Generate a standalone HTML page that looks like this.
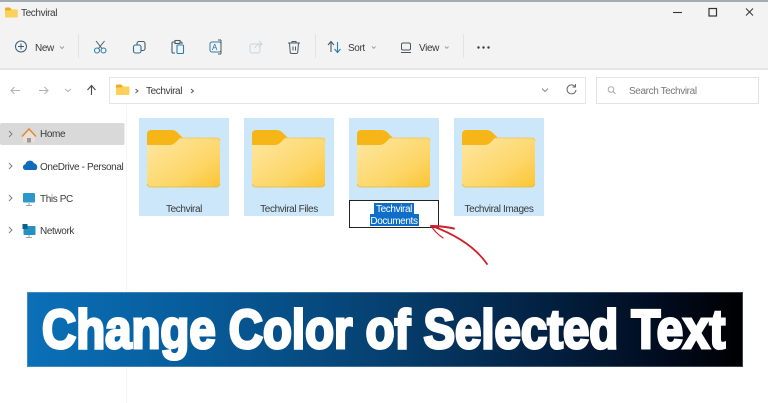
<!DOCTYPE html>
<html><head><meta charset="utf-8">
<style>
html,body{margin:0;padding:0;background:#fff}
#p{position:relative;width:768px;height:403px;overflow:hidden;background:#fff;font-family:"Liberation Sans",sans-serif;color:#333;filter:blur(.35px)}
#p div,#p svg{position:absolute}
.t{font-size:10px;line-height:12px;white-space:nowrap;color:#3a3a3a;letter-spacing:-.38px}
.tile{background:#cce6fa;width:90px;height:98px;top:118px}
.lb{text-align:center;width:90px;top:203.500px}
.ic{fill:none;stroke:#4a5560;stroke-width:1}
</style></head><body><div id="p">
<div style="left:0;top:0;width:768px;height:68px;background:#f3f3f3"></div>
<div style="left:0;top:0;width:768px;height:2px;background:#a3abb3"></div>
<div style="left:0;top:68px;width:768px;height:2px;background:#e6e6e6"></div>
<div style="left:126px;top:105px;width:1px;height:298px;background:#f6f6f6"></div>

<svg width="768" height="403" viewBox="0 0 768 403" style="left:0;top:0">
<defs>
<linearGradient id="f" x1="0" y1="0" x2="1" y2="1"><stop offset="0" stop-color="#fee7a2"/><stop offset=".65" stop-color="#fdd667"/><stop offset="1" stop-color="#fbc534"/></linearGradient>
<g id="folder">
<path d="M0 4a4 4 0 0 1 4-4h20c3 0 5 1 7 3l6 6v8H0z" fill="#f7b618"/>
<path d="M0 15h22c3 0 5-1 7-3l4-4h37a3 3 0 0 1 3 3v43a3 3 0 0 1-3 3H3a3 3 0 0 1-3-3z" fill="url(#f)"/>
<path d="M.5 54a3 3 0 0 0 3 3h66a3 3 0 0 0 3-3" fill="none" stroke="#e9b53a" stroke-width=".8"/>
<path d="M33 8h37a3 3 0 0 1 3 3" fill="none" stroke="#f2c350" stroke-width=".8"/>
</g>
<g id="mini"><path d="M0 2a1.500 1.500 0 0 1 1.500-1.500h3.500l2 2h5.500a1 1 0 0 1 1 1v6.500a1 1 0 0 1-1 1H1a1 1 0 0 1-1-1z" fill="#fbd15c"/><path d="M0 2a1.500 1.500 0 0 1 1.500-1.500h3.500l2 2-2 1H0z" fill="#eeaa20"/></g>
</defs>

<use href="#mini" transform="translate(5 7) scale(.95)"/>

<!-- new -->
<g class="ic"><circle cx="21" cy="46.500" r="5.500" stroke="#3d5c73"/><path d="M21 43.500v6M18 46.500h6" stroke="#3d5c73"/>
<path d="M60 46.500l2 2 2-2" stroke="#9aa0a5"/></g>
<!-- cut -->
<g fill="none" stroke="#2a7fb0" stroke-width="1.100"><circle cx="97" cy="50.500" r="2.500"/><circle cx="103.500" cy="50.500" r="2.500"/></g>
<path d="M98.500 48.500L104.500 41M102 48.500L96 41" stroke="#4a5a66" fill="none"/>
<!-- copy -->
<g fill="none" stroke="#2a6f9c" stroke-width="1.100"><rect x="137" y="41.500" width="8" height="9" rx="2" stroke="#4a5a66"/><rect x="133.500" y="45" width="7.500" height="8" rx="2" fill="#f3f3f3"/></g>
<!-- paste -->
<g fill="none" stroke-width="1.100"><path d="M175 53h-2a1 1 0 0 1-1-1V43a1 1 0 0 1 1-1h8a1 1 0 0 1 1 1v1" stroke="#4a5a66"/><rect x="175" y="40.500" width="5" height="3" fill="#f3f3f3" stroke="#4a5a66"/><rect x="177" y="45" width="6.500" height="8.500" rx="1" stroke="#2a7fb0"/></g>
<!-- rename -->
<g fill="none" stroke-width="1"><rect x="210" y="42" width="11" height="10" rx="2" stroke="#2a7fb0"/><path d="M218 40h3M218 54h3M221 40v14" stroke="#4a5a66"/></g>
<text x="212" y="50" font-size="8" fill="#2a6f9c" font-family="Liberation Sans">A</text>
<!-- share -->
<g fill="none" stroke="#c8d4dc"><rect x="250" y="44" width="10" height="9" rx="2"/><path d="M255 48c1-3 3-4 7-4M259 41l3 3-3 3"/></g>
<!-- delete -->
<g fill="none" stroke="#4a5a66"><path d="M288 43h12M292 43v-1.500h4V43M289.500 43l.7 9a1.500 1.500 0 0 0 1.500 1.500h4.600a1.500 1.500 0 0 0 1.500-1.500l.7-9M293 46.500v4M295.500 46.500v4"/></g>
<!-- dividers -->
<path d="M78.500 34v24M315.500 34v24M463.500 34v24" stroke="#e3e3e3"/>
<!-- sort -->
<g fill="none" stroke-width="1.100"><path d="M331 52V42M328 45l3-3.500 3 3.500" stroke="#4a5a66"/><path d="M337.500 42v10.500M334.500 49l3 3.500 3-3.500" stroke="#2a7fb0"/></g>
<path d="M372 46.500l1.800 1.800 1.800-1.800M445 46.500l1.800 1.800 1.800-1.800" stroke="#9aa0a5" fill="none"/>
<!-- view -->
<g fill="none" stroke="#4a5560"><rect x="401.500" y="43" width="9" height="7" rx="1.500"/><path d="M401 52.500h10"/></g>
<!-- dots -->
<g fill="#3a3a3a"><circle cx="478.500" cy="47.500" r="1.200"/><circle cx="483.500" cy="47.500" r="1.200"/><circle cx="488.500" cy="47.500" r="1.200"/></g>
<!-- window -->
<path d="M673 12.500h9" stroke="#333" stroke-width="1.100"/>
<rect x="709" y="8.500" width="7.500" height="7.500" fill="none" stroke="#333" stroke-width="1.200"/>
<path d="M746 8.500l7 7M753 8.500l-7 7" stroke="#333" stroke-width="1"/>

<!-- nav -->
<g fill="none" stroke="#b3b3b3" stroke-width="1.100"><path d="M20 90.500H11M14.500 87l-3.500 3.500 3.500 3.500"/><path d="M39 90.500h9M44.500 87l3.500 3.500-3.500 3.500"/><path d="M65 89l3 2.500 3-2.500"/></g>
<path d="M91.500 95v-9M87.500 90l4-4.500 4 4.500" fill="none" stroke="#4a4a4a" stroke-width="1.100"/>
<rect x="109.500" y="77.500" width="476" height="26" fill="#fff" stroke="#e6e6e6"/>
<rect x="596.500" y="77.500" width="162" height="26" fill="#fff" stroke="#e3e3e3"/>
<use href="#mini" transform="translate(116 84)"/>
<path d="M135.500 89l2.500 2-2.500 2M191 89l2.500 2-2.500 2" fill="none" stroke="#555"/>
<path d="M542 88.500l3 3 3-3" fill="none" stroke="#8a8a8a"/>
<path d="M575 86.500a4.500 4.500 0 1 0 1 3.500M575.500 84v3h-3" fill="none" stroke="#6a6a6a"/>
<circle cx="611" cy="89.500" r="2.800" fill="none" stroke="#a8a8a8"/><path d="M613 91.500l2.500 2.500" stroke="#a8a8a8"/>

<!-- sidebar -->
<rect x="0" y="123" width="124.500" height="22" rx="2" fill="#d9d9d9"/>
<path d="M9 131l3 3-3 3M9 163l3 3-3 3M9 195l3 3-3 3M9 227l3 3-3 3" fill="none" stroke="#808080"/>
<path d="M23 136l6-6 6 6v6.500H23z" fill="#e9e0d4"/><path d="M22 136.500l7-7.500 7 7.500" fill="none" stroke="#de8a3a" stroke-width="1.500"/><rect x="27" y="138" width="4" height="4.500" fill="#9a9a9a"/>
<path d="M25 170a3 3 0 0 1 .5-5.800 4.500 4.500 0 0 1 8.500-1 4 4 0 0 1 2 6.800z" fill="#0f6cbd"/>
<rect x="23" y="193" width="12" height="9.500" rx="1" fill="#2b98c9"/><path d="M29 203v2M26 205.500h6" stroke="#9ab"/>
<rect x="23.500" y="226" width="12" height="9" rx="1" fill="#2590c2"/><rect x="22.500" y="224" width="5" height="5" fill="#0d5e8c"/><path d="M29 235v2M26 237.500h6" stroke="#9ab"/>
</svg>

<div class="tile" style="left:139px"></div>
<div class="tile" style="left:244px"></div>
<div class="tile" style="left:349px;height:82px"></div>
<div class="tile" style="left:454px"></div>
<div style="left:349px;top:200px;width:87.500px;height:26px;border:1px solid #222;background:#fff"></div>

<svg width="768" height="403" viewBox="0 0 768 403" style="left:0;top:0">
<use href="#folder" transform="translate(147 130)"/>
<use href="#folder" transform="translate(252 130)"/>
<use href="#folder" transform="translate(357 130)"/>
<use href="#folder" transform="translate(462 130)"/>
<rect x="374" y="203" width="40" height="11" fill="#0f6fc8"/>
<rect x="370" y="214" width="49" height="12" fill="#0f6fc8"/>
<g fill="none" stroke="#d0202a" stroke-linecap="round"><path d="M487 264c-9-13-25-27-55-38" stroke-width="1.800"/><path d="M431 226c8 0 16 1 23 2.500" stroke-width="2"/><path d="M431 226c3 4 6 8 12 12" stroke-width="1.200"/></g>
</svg>

<div class="t" style="top:8px;left:21px">Techviral</div>
<div class="t" style="left:35px;top:43px">New</div>
<div class="t" style="left:348px;top:43px">Sort</div>
<div class="t" style="left:419px;top:43px">View</div>
<div class="t" style="left:146px;top:86px">Techviral</div>
<div class="t" style="left:629px;top:86px;color:#777">Search Techviral</div>
<div class="t" style="left:40px;top:129px">Home</div>
<div class="t" style="left:40px;top:161.500px">OneDrive - Personal</div>
<div class="t" style="left:40px;top:194px">This PC</div>
<div class="t" style="left:40px;top:226px">Network</div>
<div class="t lb" style="left:139px">Techviral</div>
<div class="t lb" style="left:244px">Techviral Files</div>
<div class="t lb" style="left:349px;color:#fff;top:204px;line-height:12px">Techviral<br>Documents</div>
<div class="t lb" style="left:454px">Techviral Images</div>

<div style="left:27px;top:292px;width:716px;height:75px;background:linear-gradient(90deg,#0a70b8 0%,#075a98 25%,#064070 50%,#03264a 68%,#010a1c 90%,#000 100%);box-shadow:inset 0 0 0 1px rgba(170,195,215,.35)"></div>
<div id="h" style="left:42px;top:295px;font-size:55px;line-height:68px;font-weight:bold;color:#fff;white-space:nowrap;transform-origin:0 0;transform:scaleX(.861);-webkit-text-stroke:3px #fff;letter-spacing:0">Change Color of Selected Text</div>
</div></body></html>
